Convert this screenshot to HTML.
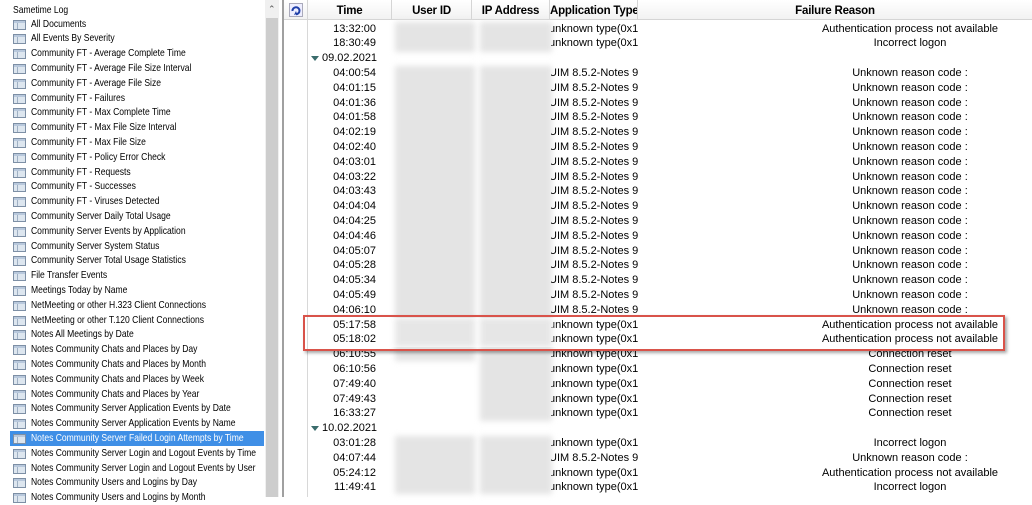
<!DOCTYPE html>
<html><head><meta charset="utf-8"><style>
*{margin:0;padding:0;box-sizing:border-box}
body{width:1032px;height:497px;overflow:hidden;background:#fff;font-family:"Liberation Sans",Arial,sans-serif;position:relative;color:#000}
#left{position:absolute;left:0;top:0;width:283px;height:497px;background:#fff;font-size:10.5px}
#left .it{position:absolute;left:0;width:264px;height:14.8px;line-height:14.8px;padding-left:31px;white-space:nowrap;overflow:hidden}
#left .it b{font-weight:normal;display:inline-block;transform:scaleX(0.815);transform-origin:0 50%}
#left .it i{position:absolute;left:13px;top:3px;width:13px;height:10px;border:1px solid #7d8fa5;background:linear-gradient(#b8c8dc 0 2px,#dde6ef 2px);}
#left .it i:after{content:"";position:absolute;left:3px;top:2px;width:1px;height:6px;background:#9fb0c4}
#left .sel{background:#3f8fe6;color:#fff;left:10px;width:254px;padding-left:21px}
#left .sel i{left:3px}
#sb{position:absolute;left:265px;top:0;width:14px;height:497px;background:#f0f0f0}
#thumb{position:absolute;left:266px;top:18px;width:12px;height:479px;background:#cdcdcd}
#vsep{position:absolute;left:282px;top:0;width:2px;height:497px;background:#a0a0a0}
#hdr{position:absolute;left:284px;top:0;width:748px;height:20px;background:linear-gradient(#fff,#f2f2f2);border-bottom:1px solid #d5d5d5;font-size:11.5px;font-weight:bold;letter-spacing:-0.2px}
#hdr div{position:absolute;top:0;height:20px;line-height:22px;text-align:center;border-right:1px solid #d5d5d5;white-space:nowrap;overflow:hidden}
#gut{position:absolute;left:284px;top:20px;width:24px;height:477px;border-right:1px solid #d8d8d8;background:#fff}
.r{position:absolute;left:308px;width:724px;height:14.8px;line-height:14.8px;font-size:11px;white-space:nowrap}
.t{position:absolute;right:656px;}
.d{position:absolute;left:14px}
.d:before{content:"";position:absolute;left:-11px;top:5px;border:4px solid transparent;border-top:5px solid #3a6c6c;border-bottom:0}
.a{position:absolute;left:243px;width:87px;overflow:hidden;text-indent:-2px}
.f{position:absolute;left:482px;width:240px;text-align:center}
.blur{position:absolute;background:#e4e4e4;filter:blur(3px)}
#box{position:absolute;left:303px;top:315px;width:702px;height:36px;border:2px solid #d9534a;box-shadow:2px 2px 3px rgba(0,0,0,.35)}
</style></head><body>
<div id="left">
<div class="it" style="top:2.6px;padding-left:13px"><b>Sametime Log</b></div>
<div class="it" style="top:16.6px"><i></i><b>All Documents</b></div>
<div class="it" style="top:31.4px"><i></i><b>All Events By Severity</b></div>
<div class="it" style="top:46.2px"><i></i><b>Community FT - Average Complete Time</b></div>
<div class="it" style="top:61px"><i></i><b>Community FT - Average File Size Interval</b></div>
<div class="it" style="top:75.8px"><i></i><b>Community FT - Average File Size</b></div>
<div class="it" style="top:90.6px"><i></i><b>Community FT - Failures</b></div>
<div class="it" style="top:105.4px"><i></i><b>Community FT - Max Complete Time</b></div>
<div class="it" style="top:120.2px"><i></i><b>Community FT - Max File Size Interval</b></div>
<div class="it" style="top:135px"><i></i><b>Community FT - Max File Size</b></div>
<div class="it" style="top:149.8px"><i></i><b>Community FT - Policy Error Check</b></div>
<div class="it" style="top:164.6px"><i></i><b>Community FT - Requests</b></div>
<div class="it" style="top:179.4px"><i></i><b>Community FT - Successes</b></div>
<div class="it" style="top:194.2px"><i></i><b>Community FT - Viruses Detected</b></div>
<div class="it" style="top:209px"><i></i><b>Community Server Daily Total Usage</b></div>
<div class="it" style="top:223.8px"><i></i><b>Community Server Events by Application</b></div>
<div class="it" style="top:238.6px"><i></i><b>Community Server System Status</b></div>
<div class="it" style="top:253.4px"><i></i><b>Community Server Total Usage Statistics</b></div>
<div class="it" style="top:268.2px"><i></i><b>File Transfer Events</b></div>
<div class="it" style="top:283px"><i></i><b>Meetings Today by Name</b></div>
<div class="it" style="top:297.8px"><i></i><b>NetMeeting or other H.323 Client Connections</b></div>
<div class="it" style="top:312.6px"><i></i><b>NetMeeting or other T.120 Client Connections</b></div>
<div class="it" style="top:327.4px"><i></i><b>Notes All Meetings by Date</b></div>
<div class="it" style="top:342.2px"><i></i><b>Notes Community Chats and Places by Day</b></div>
<div class="it" style="top:357px"><i></i><b>Notes Community Chats and Places by Month</b></div>
<div class="it" style="top:371.8px"><i></i><b>Notes Community Chats and Places by Week</b></div>
<div class="it" style="top:386.6px"><i></i><b>Notes Community Chats and Places by Year</b></div>
<div class="it" style="top:401.4px"><i></i><b>Notes Community Server Application Events by Date</b></div>
<div class="it" style="top:416.2px"><i></i><b>Notes Community Server Application Events by Name</b></div>
<div class="it sel" style="top:431px"><i></i><b>Notes Community Server Failed Login Attempts by Time</b></div>
<div class="it" style="top:445.8px"><i></i><b>Notes Community Server Login and Logout Events by Time</b></div>
<div class="it" style="top:460.6px"><i></i><b>Notes Community Server Login and Logout Events by User</b></div>
<div class="it" style="top:475.4px"><i></i><b>Notes Community Users and Logins by Day</b></div>
<div class="it" style="top:490.2px"><i></i><b>Notes Community Users and Logins by Month</b></div>
</div>
<div id="sb"></div><div id="thumb"></div>
<div style="position:absolute;left:268px;top:4px;font-size:9px;color:#555">&#8963;</div>
<div id="vsep"></div>
<div id="hdr">
<div style="left:0;width:24px"><svg width="14" height="14" viewBox="0 0 14 14" style="margin-top:3px"><rect x="0.5" y="0.5" width="13" height="13" fill="#eef" stroke="#aab"/><path d="M3.5 8a3.5 3.5 0 1 1 3.5 3.2" fill="none" stroke="#1f3fa8" stroke-width="2"/><path d="M5 12l3-1-1-3z" fill="#1f3fa8"/></svg></div>
<div style="left:24px;width:84px">Time</div>
<div style="left:108px;width:80px">User ID</div>
<div style="left:188px;width:78px">IP Address</div>
<div style="left:266px;width:88px">Application Type</div>
<div style="left:354px;width:394px;border-right:0">Failure Reason</div>
</div>
<div id="gut"></div>
<div class="blur" style="left:395px;top:22px;width:80px;height:30px"></div>
<div class="blur" style="left:480px;top:22px;width:72px;height:30px"></div>
<div class="blur" style="left:395px;top:66px;width:80px;height:295px"></div>
<div class="blur" style="left:480px;top:66px;width:72px;height:355px"></div>
<div class="blur" style="left:395px;top:436px;width:80px;height:58px"></div>
<div class="blur" style="left:480px;top:436px;width:72px;height:58px"></div>

<div class="r" style="top:21.6px"><span class="t">13:32:00</span><span class="a">unknown type(0x1</span><span class="f">Authentication process not available</span></div>
<div class="r" style="top:36.4px"><span class="t">18:30:49</span><span class="a">unknown type(0x1</span><span class="f">Incorrect logon</span></div>
<div class="r" style="top:51.2px"><span class="d">09.02.2021</span></div>
<div class="r" style="top:66px"><span class="t">04:00:54</span><span class="a">UIM 8.5.2-Notes 9</span><span class="f">Unknown reason code :</span></div>
<div class="r" style="top:80.8px"><span class="t">04:01:15</span><span class="a">UIM 8.5.2-Notes 9</span><span class="f">Unknown reason code :</span></div>
<div class="r" style="top:95.6px"><span class="t">04:01:36</span><span class="a">UIM 8.5.2-Notes 9</span><span class="f">Unknown reason code :</span></div>
<div class="r" style="top:110.4px"><span class="t">04:01:58</span><span class="a">UIM 8.5.2-Notes 9</span><span class="f">Unknown reason code :</span></div>
<div class="r" style="top:125.2px"><span class="t">04:02:19</span><span class="a">UIM 8.5.2-Notes 9</span><span class="f">Unknown reason code :</span></div>
<div class="r" style="top:140px"><span class="t">04:02:40</span><span class="a">UIM 8.5.2-Notes 9</span><span class="f">Unknown reason code :</span></div>
<div class="r" style="top:154.8px"><span class="t">04:03:01</span><span class="a">UIM 8.5.2-Notes 9</span><span class="f">Unknown reason code :</span></div>
<div class="r" style="top:169.6px"><span class="t">04:03:22</span><span class="a">UIM 8.5.2-Notes 9</span><span class="f">Unknown reason code :</span></div>
<div class="r" style="top:184.4px"><span class="t">04:03:43</span><span class="a">UIM 8.5.2-Notes 9</span><span class="f">Unknown reason code :</span></div>
<div class="r" style="top:199.2px"><span class="t">04:04:04</span><span class="a">UIM 8.5.2-Notes 9</span><span class="f">Unknown reason code :</span></div>
<div class="r" style="top:214px"><span class="t">04:04:25</span><span class="a">UIM 8.5.2-Notes 9</span><span class="f">Unknown reason code :</span></div>
<div class="r" style="top:228.8px"><span class="t">04:04:46</span><span class="a">UIM 8.5.2-Notes 9</span><span class="f">Unknown reason code :</span></div>
<div class="r" style="top:243.6px"><span class="t">04:05:07</span><span class="a">UIM 8.5.2-Notes 9</span><span class="f">Unknown reason code :</span></div>
<div class="r" style="top:258.4px"><span class="t">04:05:28</span><span class="a">UIM 8.5.2-Notes 9</span><span class="f">Unknown reason code :</span></div>
<div class="r" style="top:273.2px"><span class="t">04:05:34</span><span class="a">UIM 8.5.2-Notes 9</span><span class="f">Unknown reason code :</span></div>
<div class="r" style="top:288px"><span class="t">04:05:49</span><span class="a">UIM 8.5.2-Notes 9</span><span class="f">Unknown reason code :</span></div>
<div class="r" style="top:302.8px"><span class="t">04:06:10</span><span class="a">UIM 8.5.2-Notes 9</span><span class="f">Unknown reason code :</span></div>
<div class="r" style="top:317.6px;background:#fff"><span class="t">05:17:58</span><span class="a">unknown type(0x1</span><span class="f">Authentication process not available</span></div>
<div class="r" style="top:332.4px;background:#fff"><span class="t">05:18:02</span><span class="a">unknown type(0x1</span><span class="f">Authentication process not available</span></div>
<div class="r" style="top:347.2px"><span class="t">06:10:55</span><span class="a">unknown type(0x1</span><span class="f">Connection reset</span></div>
<div class="r" style="top:362px"><span class="t">06:10:56</span><span class="a">unknown type(0x1</span><span class="f">Connection reset</span></div>
<div class="r" style="top:376.8px"><span class="t">07:49:40</span><span class="a">unknown type(0x1</span><span class="f">Connection reset</span></div>
<div class="r" style="top:391.6px"><span class="t">07:49:43</span><span class="a">unknown type(0x1</span><span class="f">Connection reset</span></div>
<div class="r" style="top:406.4px"><span class="t">16:33:27</span><span class="a">unknown type(0x1</span><span class="f">Connection reset</span></div>
<div class="r" style="top:421.2px"><span class="d">10.02.2021</span></div>
<div class="r" style="top:436px"><span class="t">03:01:28</span><span class="a">unknown type(0x1</span><span class="f">Incorrect logon</span></div>
<div class="r" style="top:450.8px"><span class="t">04:07:44</span><span class="a">UIM 8.5.2-Notes 9</span><span class="f">Unknown reason code :</span></div>
<div class="r" style="top:465.6px"><span class="t">05:24:12</span><span class="a">unknown type(0x1</span><span class="f">Authentication process not available</span></div>
<div class="r" style="top:480.4px"><span class="t">11:49:41</span><span class="a">unknown type(0x1</span><span class="f">Incorrect logon</span></div>
<div class="blur" style="left:395px;top:318px;width:80px;height:29px;opacity:.9"></div>
<div class="blur" style="left:480px;top:318px;width:72px;height:29px;opacity:.9"></div>
<div id="box"></div>
</body></html>
